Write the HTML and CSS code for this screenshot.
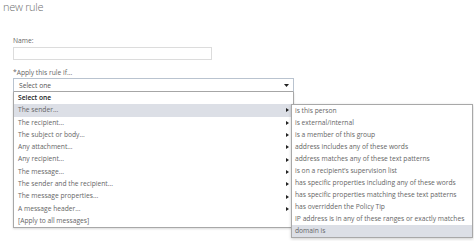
FILE: index.html
```html
<!DOCTYPE html>
<html>
<head>
<meta charset="utf-8">
<link rel="stylesheet" href="styles.css">
</head>
<body>
<h1 class="title">new rule</h1>
<div class="form">
  <div class="label label-name">Name:</div>
  <div class="input"></div>
  <div class="label label-apply">*Apply this rule if...</div>
  <div class="combo">
    <div class="select">
      <span>Select one</span>
      <svg class="caret" width="5" height="3" viewBox="0 0 5 3"><path d="M0 0H5L2.5 3Z" fill="#222"/></svg>
    </div>
    <ul class="list">
      <li class="item head">Select one</li>
      <li class="item sub active">The sender...
        <ul class="submenu">
          <li class="sitem">is this person</li>
          <li class="sitem">is external/internal</li>
          <li class="sitem">is a member of this group</li>
          <li class="sitem">address includes any of these words</li>
          <li class="sitem">address matches any of these text patterns</li>
          <li class="sitem">is on a recipient’s supervision list</li>
          <li class="sitem">has specific properties including any of these words</li>
          <li class="sitem">has specific properties matching these text patterns</li>
          <li class="sitem">has overridden the Policy Tip</li>
          <li class="sitem">IP address is in any of these ranges or exactly matches</li>
          <li class="sitem active">domain is</li>
        </ul>
      </li>
      <li class="item sub">The recipient...</li>
      <li class="item sub">The subject or body...</li>
      <li class="item sub">Any attachment...</li>
      <li class="item sub">Any recipient...</li>
      <li class="item sub">The message...</li>
      <li class="item sub">The sender and the recipient...</li>
      <li class="item sub">The message properties...</li>
      <li class="item sub">A message header...</li>
      <li class="item">[Apply to all messages]</li>
    </ul>
  </div>
</div>
</body>
</html>
```
FILE: styles.css
```css
html, body {
  margin: 0;
  padding: 0;
  background: #fff;
}
body {
  width: 474px;
  height: 241px;
  overflow: hidden;
  font-family: "Segoe UI", "Open Sans", "Noto Sans", sans-serif;
}
.title {
  margin: 0;
  padding-left: 3px;
  font-size: 11px;
  font-weight: 300;
  line-height: 14px;
  color: #707070;
  letter-spacing: -0.3px;
}
.form {
  padding-left: 13px;
}
.label {
  font-size: 6.7px;
  line-height: 10px;
  color: #666;
}
.label-name {
  margin-top: 22px;
}
.input {
  margin-top: 1px;
  width: 197px;
  height: 11px;
  border: 1px solid #dcdcdc;
}
.label-apply {
  margin-top: 8px;
}
.combo {
  position: relative;
  width: 281px;
}
.select {
  height: 12px;
  border: 1px solid #b9c3cf;
  border-bottom-color: #a8a8a8;
  display: flex;
  align-items: center;
  justify-content: space-between;
  padding: 0 4px 0 5px;
  font-size: 6.7px;
  color: #555;
}
.caret {
  display: block;
}
.list {
  list-style: none;
  margin: 0;
  padding: 0;
  border: 1px solid #a8a8a8;
  border-top: none;
  box-shadow: 0 1px 2px rgba(0,0,0,0.15);
  position: relative;
}
.item {
  position: relative;
  height: 12.3px;
  line-height: 12.3px;
  padding-left: 4px;
  font-size: 6.7px;
  color: #666;
  white-space: nowrap;
}
.item.head {
  color: #222;
  font-weight: 600;
}
.item.active {
  background: #dcdfe6;
}
.item.sub::after {
  content: "";
  position: absolute;
  right: 4px;
  top: 50%;
  margin-top: -2px;
  border-left: 3px solid #222;
  border-top: 2px solid transparent;
  border-bottom: 2px solid transparent;
}
.submenu {
  list-style: none;
  margin: 0;
  padding: 0;
  position: absolute;
  left: 277px;
  top: 0;
  width: 180px;
  background: #fff;
  border: 1px solid #a8a8a8;
  box-shadow: 0 1px 3px rgba(0,0,0,0.2);
  z-index: 2;
}
.sitem {
  height: 12px;
  line-height: 12px;
  padding-left: 3px;
  font-size: 6.7px;
  color: #666;
  font-weight: 400;
  white-space: nowrap;
}
.sitem.active {
  background: #dcdfe6;
}
```
